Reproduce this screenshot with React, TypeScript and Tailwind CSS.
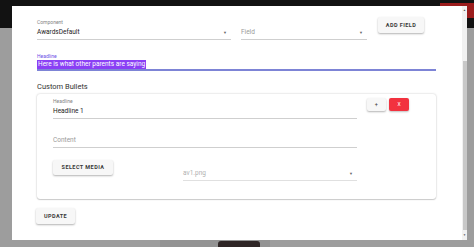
import React from "react";

const font = { fontFamily: "Roboto, 'Liberation Sans', sans-serif" };

function Caret() {
  return <span className="text-[4px] leading-none text-[#666]">▼</span>;
}

function Field({
  label,
  value,
  placeholder,
  select,
  className = "",
}: {
  label?: string;
  value?: string;
  placeholder?: string;
  select?: boolean;
  className?: string;
}) {
  return (
    <div className={`flex flex-col ${className}`}>
      <div className="h-[7px] text-[5px] leading-[7px] text-[#858585]">{label}</div>
      <div className="flex h-[14px] items-center justify-between border-b border-[#cfcfcf] pr-[4px]">
        {value ? (
          <span className="text-[6.5px] text-[#222]">{value}</span>
        ) : (
          <span className="text-[6.5px] text-[#9a9a9a]">{placeholder}</span>
        )}
        {select && <Caret />}
      </div>
    </div>
  );
}

function Btn({ children, className = "" }: { children: React.ReactNode; className?: string }) {
  return (
    <button
      className={`flex items-center justify-center rounded-[2px] bg-[#f7f7f7] text-[5.5px] font-bold tracking-[0.08em] text-[#3a3a3a] shadow-[0_1px_2px_rgba(0,0,0,0.3)] ${className}`}
    >
      {children}
    </button>
  );
}

export default function App() {
  return (
    <div style={font} className="relative h-[247px] w-[474px] overflow-hidden bg-[#9d9d9d]">
      {/* page behind the dialog */}
      <div className="h-[28px] bg-[#121212]" />
      <div className="absolute right-0 top-[3px] h-[15px] w-[34px] bg-[#9b1c1c]" />
      <div className="absolute bottom-0 left-[160px] h-[7px] w-[110px] bg-[#939393]" />
      <div className="absolute bottom-0 left-[218px] h-[6px] w-[42px] rounded-t-[3px] bg-[#2f2626]" />

      {/* dialog */}
      <div className="absolute left-[12px] top-[6px] flex h-[234px] w-[455px] bg-white">
        <div className="flex flex-1 flex-col pl-[25px] pr-[26px] pt-[11px]">
          <div className="flex items-start">
            <Field label="Component" value="AwardsDefault" select className="mt-[2px] w-[194px]" />
            <Field placeholder="Field" select className="ml-[10px] mt-[2px] w-[126px]" />
            <Btn className="ml-[11px] h-[16px] w-[46px]">ADD FIELD</Btn>
          </div>

          <div className="mt-[13px] flex flex-col">
            <div className="h-[7px] text-[5px] leading-[7px] text-[#6d4ee6]">Headline</div>
            <div className="flex h-[11px] items-center border-b-2 border-[#7d84d6]">
              <span className="bg-[#8a3ff5] px-[1px] text-[6.5px] leading-[9px] text-white">
                Here is what other parents are saying
              </span>
            </div>
          </div>

          <div className="mt-[11px] text-[7.5px] leading-[9px] text-[#333]">Custom Bullets</div>

          <div className="mt-[3px] flex flex-col rounded-[3px] pb-[18px] pl-[16px] pr-[27px] pt-[4px] shadow-[0_0_2px_rgba(0,0,0,0.25),0_1px_1px_rgba(0,0,0,0.15)]">
            <div className="flex items-start">
              <Field label="Headline" value="Headline 1" className="w-[304px]" />
              <Btn className="ml-[10px] h-[13px] w-[19px] bg-[#efefef] font-normal">+</Btn>
              <button className="ml-[3px] flex h-[13px] w-[20px] items-center justify-center rounded-[2px] bg-[#f2323f] text-[5px] text-white shadow-[0_1px_2px_rgba(0,0,0,0.25)]">
                X
              </button>
            </div>
            <Field placeholder="Content" className="mt-[8px] w-[304px]" />
            <div className="mt-[12px] flex items-start">
              <Btn className="h-[15px] w-[60px]">SELECT MEDIA</Btn>
              <div className="ml-[70px] mt-[8px] flex h-[13px] w-[174px] items-center justify-between border-b border-[#e0e0e0] pr-[4px]">
                <span className="text-[6.5px] text-[#b0b0b0]">av1.png</span>
                <Caret />
              </div>
            </div>
          </div>

          <Btn className="-ml-[1px] mt-[9px] h-[16px] w-[39px]">UPDATE</Btn>
        </div>

        {/* scrollbar */}
        <div className="flex w-[5px] flex-col items-center bg-[#f1f1f1]">
          <span className="mt-[2px] text-[3px] leading-[4px] text-[#555]">▲</span>
          <div className="mt-[49px] h-[169px] w-[4px] bg-[#c8c8c8]" />
          <span className="mt-[3px] text-[3px] leading-[4px] text-[#555]">▼</span>
        </div>
      </div>
    </div>
  );
}
